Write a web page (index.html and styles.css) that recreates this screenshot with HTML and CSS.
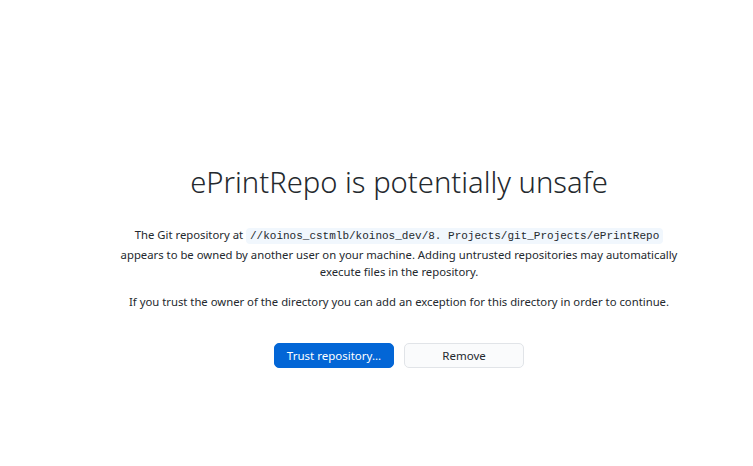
FILE: index.html
```html
<!DOCTYPE html>
<html>
<head>
<meta charset="utf-8">
<link rel="stylesheet" href="styles.css">
</head>
<body>
<main class="page">
  <h1 class="title">ePrintRepo is potentially unsafe</h1>
  <p class="desc">The Git repository at <code class="path">//koinos_cstmlb/koinos_dev/8. Projects/git_Projects/ePrintRepo</code> appears to be owned by another user on your machine. Adding untrusted repositories may automatically execute files in the repository.</p>
  <p class="desc">If you trust the owner of the directory you can add an exception for this directory in order to continue.</p>
  <div class="actions">
    <button class="btn primary">Trust repository...</button>
    <button class="btn">Remove</button>
  </div>
</main>
</body>
</html>
```
FILE: styles.css
```css
html, body {
  margin: 0;
  padding: 0;
  background: #ffffff;
}
body {
  font-family: "Noto Sans", "Open Sans", sans-serif;
  color: #24292e;
}
.page {
  display: flex;
  flex-direction: column;
  align-items: center;
  padding: 160px 0 0 45px;
}
.title {
  margin: 0 0 22px;
  font-size: 29.2px;
  font-weight: 300;
  line-height: 44px;
  color: #24292e;
}
.desc {
  margin: 0 0 12px;
  width: 568px;
  font-size: 11.3px;
  line-height: 17.5px;
  text-align: center;
}
.path {
  font-family: "Liberation Mono", monospace;
  font-size: 11px;
  background: #f1f7fd;
  border-radius: 4px;
  padding: 2px 4px;
}
.actions {
  display: flex;
  gap: 10px;
  margin-top: 21px;
}
.btn {
  width: 120px;
  height: 25px;
  border: 1px solid #e1e4e8;
  border-radius: 5px;
  background: #fafbfc;
  color: #24292e;
  font-family: "Noto Sans", "Open Sans", sans-serif;
  font-size: 11.5px;
  padding: 0;
}
.btn.primary {
  background: #0366d6;
  border-color: #0366d6;
  color: #ffffff;
}
```
